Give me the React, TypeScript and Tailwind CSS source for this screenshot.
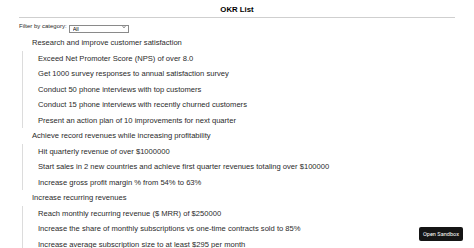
import React, { useState } from "react";

interface Objective {
  title: string;
  category: string;
  keyResults: string[];
}

const objectives: Objective[] = [
  {
    title: "Research and improve customer satisfaction",
    category: "Customer",
    keyResults: [
      "Exceed Net Promoter Score (NPS) of over 8.0",
      "Get 1000 survey responses to annual satisfaction survey",
      "Conduct 50 phone interviews with top customers",
      "Conduct 15 phone interviews with recently churned customers",
      "Present an action plan of 10 improvements for next quarter",
    ],
  },
  {
    title: "Achieve record revenues while increasing profitability",
    category: "Revenue",
    keyResults: [
      "Hit quarterly revenue of over $1000000",
      "Start sales in 2 new countries and achieve first quarter revenues totaling over $100000",
      "Increase gross profit margin % from 54% to 63%",
    ],
  },
  {
    title: "Increase recurring revenues",
    category: "Revenue",
    keyResults: [
      "Reach monthly recurring revenue ($ MRR) of $250000",
      "Increase the share of monthly subscriptions vs one-time contracts sold to 85%",
      "Increase average subscription size to at least $295 per month",
    ],
  },
];

export default function App() {
  const [category, setCategory] = useState("All");
  const shown = objectives.filter((o) => category === "All" || o.category === category);

  return (
    <div className="relative h-[248px] overflow-hidden bg-white px-[19px] text-[7.6px] text-[#2a2a2a] font-['Liberation_Sans',Arial,sans-serif]">
      <h1 className="border-b border-[#cfcfcf] pt-[5px] pb-[3px] text-center text-[7.8px] leading-[9px] font-bold text-black">
        OKR List
      </h1>

      <div className="mt-[4px] flex h-[9px] items-center">
        <label className="text-[6px] leading-[9px]">Filter by category:</label>
        <div className="relative ml-[2px] h-[8px] w-[60px]">
          <select
            value={category}
            onChange={(e) => setCategory(e.target.value)}
            className="h-[8px] w-[60px] appearance-none border border-[#8a8a8a] bg-white pl-[3px] text-[5.5px] leading-[6px] text-black outline-none"
          >
            <option>All</option>
            <option>Customer</option>
            <option>Revenue</option>
          </select>
          <svg
            className="pointer-events-none absolute right-[3px] top-[2px] h-[4px] w-[4px]"
            viewBox="0 0 10 10"
            fill="none"
            stroke="#222"
            strokeWidth="2"
          >
            <path d="M2 3.5l3 3 3-3" />
          </svg>
        </div>
      </div>

      <ul className="mt-[4px] pl-[3px]">
        {shown.map((o) => (
          <li key={o.title}>
            <div className="pl-[10px] leading-[15.5px] whitespace-nowrap">{o.title}</div>
            <ul className="border-l border-[#dcdcdc] pl-[15px]">
              {o.keyResults.map((kr) => (
                <li key={kr} className="leading-[15.5px] whitespace-nowrap">
                  {kr}
                </li>
              ))}
            </ul>
          </li>
        ))}
      </ul>

      <button className="absolute right-[11px] bottom-[7px] h-[14px] rounded-[2px] bg-[#151515] px-[4px] text-[5.6px] leading-[14px] text-white font-['Roboto',sans-serif]">
        Open Sandbox
      </button>
    </div>
  );
}
